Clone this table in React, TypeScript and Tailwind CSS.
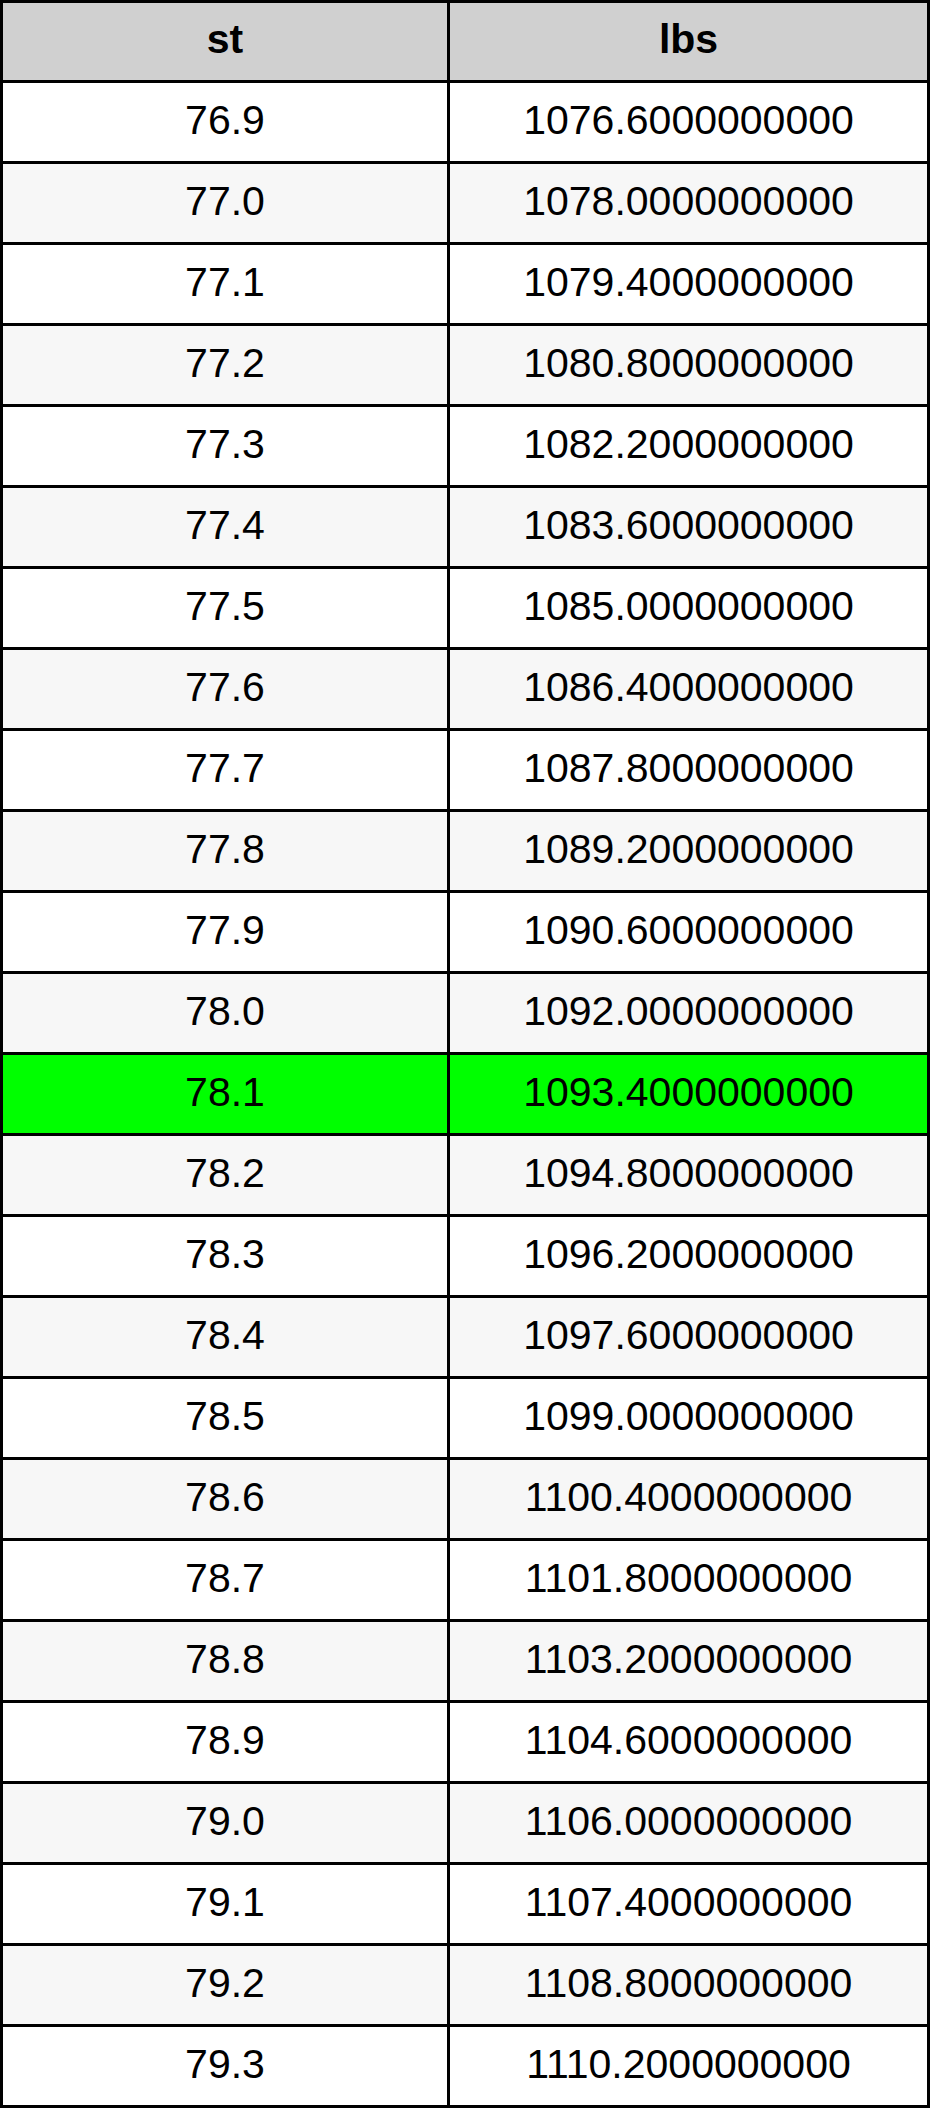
import React from "react";

const rows: [string, string][] = [];
for (let i = 0; i < 25; i++) {
  const st = 76.9 + i * 0.1;
  const lbs = st * 14;
  rows.push([st.toFixed(1), lbs.toFixed(10)]);
}

export default function App() {
  return (
    <div className="w-[930px] bg-white" style={{ fontFamily: '"Liberation Sans", Arial, sans-serif' }}>
      <div className="w-[930px] border-[3px] border-black text-black text-[41px] leading-none">
        <div className="flex h-[77px] bg-[#d0d0d0] font-bold">
          <div className="w-[444px] flex items-center justify-center pb-[4px]">st</div>
          <div className="w-[3px] bg-black" />
          <div className="flex-1 flex items-center justify-center pb-[4px]">lbs</div>
        </div>
        {rows.map(([a, b], i) => {
          const bg = a === "78.1" ? "bg-[#00ff00]" : i % 2 === 0 ? "bg-white" : "bg-[#f7f7f7]";
          return (
            <div key={a} className={`flex h-[81px] border-t-[3px] border-black ${bg}`}>
              <div className="w-[444px] flex items-center justify-center pb-[4px]">{a}</div>
              <div className="w-[3px] bg-black" />
              <div className="flex-1 flex items-center justify-center pb-[4px]">{b}</div>
            </div>
          );
        })}
      </div>
    </div>
  );
}
